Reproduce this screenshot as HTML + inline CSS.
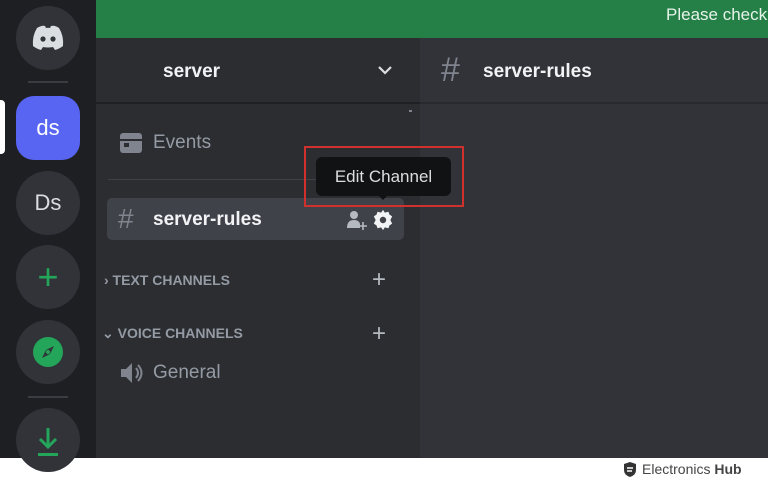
<!DOCTYPE html>
<html><head><style>
*{margin:0;padding:0;box-sizing:border-box}
body{width:768px;height:480px;overflow:hidden;background:#fff;font-family:"Liberation Sans",sans-serif;position:relative}
.a{position:absolute}
.c{position:absolute;left:16px;width:64px;height:64px;border-radius:50%;background:#313338;display:flex;align-items:center;justify-content:center;color:#dbdee1;font-size:22px}
</style></head><body>
<div class="a" style="left:0;top:0;width:96px;height:458px;background:#1e1f22"></div>
<div class="a" style="left:96px;top:0;width:672px;height:38px;background:#248046"></div>
<div class="a" style="left:666px;top:5px;color:#e6f3ea;font-size:17px">Please check</div>
<div class="a" style="left:96px;top:38px;width:324px;height:420px;background:#2b2d31"></div>
<div class="a" style="left:420px;top:38px;width:348px;height:420px;background:#313338"></div>
<div class="a" style="left:96px;top:102px;width:324px;height:2px;background:#1f2023"></div>
<div class="a" style="left:420px;top:102px;width:348px;height:2px;background:#28292d"></div>
<!-- rail -->
<div class="c" style="top:6px"><svg width="34" height="26" viewBox="0 0 34 26"><path d="M6 3 Q11 0 14 1 L15 3 Q17 2.6 19 3 L20 1 Q24 0 28 3 Q33 11 32 21 Q28 24 24 25 L22 22 Q17 23 12 22 L10 25 Q6 24 2 21 Q1 11 6 3Z" fill="#dbdee1"/><circle cx="12" cy="14" r="2.6" fill="#313338"/><circle cx="22" cy="14" r="2.6" fill="#313338"/></svg></div>
<div class="a" style="left:28px;top:81px;width:40px;height:2px;background:#3a3c42"></div>
<div class="a" style="left:0;top:100px;width:5px;height:54px;background:#fff;border-radius:0 4px 4px 0"></div>
<div class="c" style="top:96px;border-radius:18px;background:#5865f2;color:#fff">ds</div>
<div class="c" style="top:171px">Ds</div>
<div class="c" style="top:245px;color:#23a55a;font-size:36px;font-weight:300">+</div>
<div class="c" style="top:320px"><svg width="32" height="32"><circle cx="16" cy="16" r="15" fill="#23a55a"/><path d="M22 10 L18 18 L10 22 L14 14Z" fill="#313338"/><circle cx="16" cy="16" r="2" fill="#23a55a"/></svg></div>
<div class="a" style="left:28px;top:396px;width:40px;height:2px;background:#3a3c42"></div>
<div class="c" style="top:408px"><svg width="30" height="36"><path d="M15 6 V24 M7 17 L15 25 L23 17" stroke="#23a55a" stroke-width="3" fill="none"/><rect x="5" y="31" width="20" height="3" fill="#23a55a"/></svg></div>
<!-- sidebar -->
<div class="a" style="left:163px;top:61px;color:#f2f3f5;font-size:19px;font-weight:bold">server</div>
<svg class="a" style="left:377px;top:65px" width="16" height="10"><path d="M2 2 L8 8 L14 2" stroke="#dbdee1" stroke-width="2.2" fill="none"/></svg>
<div class="a" style="left:409px;top:110px;width:3px;height:2px;background:#80848e"></div>
<svg class="a" style="left:119px;top:130px" width="24" height="24"><rect x="1" y="3" width="22" height="20" rx="3" fill="#80848e"/><rect x="1" y="9" width="22" height="2" fill="#2b2d31"/><rect x="5" y="13" width="5" height="4" fill="#2b2d31"/></svg>
<div class="a" style="left:153px;top:132px;color:#949ba4;font-size:19px">Events</div>
<div class="a" style="left:108px;top:179px;width:300px;height:1px;background:#3f4147"></div>
<div class="a" style="left:107px;top:198px;width:297px;height:42px;background:#404249;border-radius:5px"></div>
<div class="a" style="left:118px;top:203px;color:#80848e;font-size:28px">#</div>
<div class="a" style="left:153px;top:209px;color:#f2f3f5;font-size:19px;font-weight:bold">server-rules</div>
<svg class="a" style="left:345px;top:210px" width="22" height="20"><circle cx="9" cy="5" r="4" fill="#b5bac1"/><path d="M2 18 Q2 10 9 10 Q14 10 15 14 L15 18Z" fill="#b5bac1"/><path d="M18 12 V20 M14 16 H22" stroke="#b5bac1" stroke-width="1.6"/></svg>
<svg class="a" style="left:372px;top:209px" width="22" height="22" viewBox="0 0 24 24"><path d="M12 1 L14 4 L18 3 L19 6 L22 8 L20 12 L22 16 L19 18 L18 21 L14 20 L12 23 L10 20 L6 21 L5 18 L2 16 L4 12 L2 8 L5 6 L6 3 L10 4Z" fill="#f2f3f5"/><circle cx="12" cy="12" r="3.5" fill="#404249"/></svg>
<div class="a" style="left:304px;top:146px;width:160px;height:61px;border:2px solid #d0312d"></div>
<div class="a" style="left:316px;top:157px;width:135px;height:39px;background:#111214;border-radius:6px;color:#dbdee1;font-size:17px;line-height:39px;text-align:center">Edit Channel</div>
<div class="a" style="left:378px;top:195px;width:0;height:0;border:5px solid transparent;border-top-color:#111214"></div>
<div class="a" style="left:104px;top:272px;color:#949ba4;font-size:14px;font-weight:bold">›&nbsp;TEXT CHANNELS</div>
<div class="a" style="left:372px;top:266px;color:#b5bac1;font-size:24px">+</div>
<div class="a" style="left:102px;top:325px;color:#949ba4;font-size:14px;font-weight:bold">⌄&nbsp;VOICE CHANNELS</div>
<div class="a" style="left:372px;top:320px;color:#b5bac1;font-size:24px">+</div>
<svg class="a" style="left:119px;top:361px" width="26" height="24"><path d="M2 8 H7 L13 2 V22 L7 16 H2Z" fill="#80848e"/><path d="M17 7 Q21 12 17 17 M19 4 Q26 12 19 20" stroke="#80848e" stroke-width="2" fill="none"/></svg>
<div class="a" style="left:153px;top:362px;color:#949ba4;font-size:19px">General</div>
<!-- header -->
<div class="a" style="left:441px;top:51px;color:#80848e;font-size:34px">#</div>
<div class="a" style="left:483px;top:61px;color:#f2f3f5;font-size:19px;font-weight:bold">server-rules</div>
<!-- footer -->
<svg class="a" style="left:623px;top:461px" width="14" height="17"><path d="M7 1 L13 3 V9 Q13 14 7 16 Q1 14 1 9 V3Z" fill="#333"/><path d="M4 7 H10 M4 10 H9" stroke="#fff" stroke-width="1.5"/></svg>
<div class="a" style="left:642px;top:461px;color:#444;font-size:14px">Electronics <b>Hub</b></div>
</body></html>
